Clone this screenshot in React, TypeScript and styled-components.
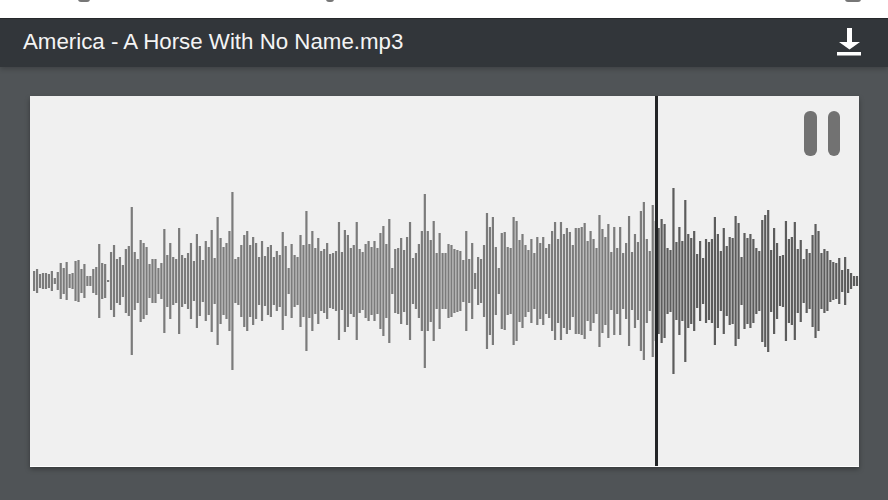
import React, { FC } from "react";
import styled, { createGlobalStyle } from "styled-components";

const GlobalStyle = createGlobalStyle`
  html, body {
    margin: 0;
    padding: 0;
    background: #ffffff;
  }
  body {
    width: 888px;
    height: 500px;
    overflow: hidden;
    font-family: "Liberation Sans", Arial, sans-serif;
  }
`;

// half heights of each bar, read off the reference, centre line is y=185 in the svg
const PEAKS = [
  10, 12, 7, 8, 8, 7, 10, 3, 9, 18, 13, 19, 7, 8, 20, 21, 12, 17, 5, 5, 12, 14, 37, 18, 17, 1, 29, 36, 22, 24,
  16, 32, 35, 74, 29, 22, 41, 38, 34, 17, 22, 22, 13, 18, 52, 26, 38, 24, 22, 53, 26, 23, 28, 38, 20, 47, 35, 21, 40, 34,
  51, 23, 64, 43, 34, 38, 50, 89, 22, 24, 36, 46, 50, 36, 44, 38, 24, 40, 25, 34, 36, 24, 30, 26, 49, 35, 13, 37, 26, 24,
  46, 36, 70, 37, 50, 33, 43, 30, 32, 38, 27, 28, 30, 59, 29, 51, 46, 33, 36, 59, 32, 29, 37, 40, 34, 40, 33, 48, 55, 37,
  62, 13, 32, 33, 43, 31, 44, 59, 23, 28, 37, 50, 87, 50, 41, 60, 28, 48, 28, 28, 37, 36, 32, 31, 30, 21, 50, 22, 38, 8,
  24, 22, 36, 68, 54, 64, 34, 13, 48, 49, 34, 33, 64, 60, 41, 47, 36, 31, 42, 28, 44, 38, 44, 33, 37, 50, 59, 42, 59, 47,
  53, 49, 36, 53, 53, 54, 58, 40, 50, 42, 33, 66, 52, 44, 57, 29, 54, 33, 54, 28, 38, 65, 29, 47, 39, 70, 79, 42, 30, 76,
  60, 53, 62, 57, 33, 31, 93, 39, 54, 40, 81, 47, 43, 50, 27, 40, 23, 42, 39, 42, 64, 47, 30, 53, 35, 44, 43, 65, 58, 24,
  48, 43, 47, 42, 33, 30, 61, 66, 71, 31, 53, 38, 25, 26, 60, 42, 44, 59, 32, 41, 22, 32, 28, 46, 57, 50, 28, 32, 30, 21,
  19, 18, 23, 11, 24, 12, 8, 5, 5,
];

const BAR_STEP = 2.96;
const PLAYED_UNTIL = 625;

const Page = styled.div`
  width: 888px;
  height: 500px;
  display: flex;
  flex-direction: column;
  background: #ffffff;
  overflow: hidden;
`;

const PageAbove = styled.div`
  position: relative;
  height: 18px;
  flex: none;
  background: #ffffff;
  overflow: hidden;
`;

const Descender = styled.span<{ $left: number; $width: number }>`
  position: absolute;
  top: -1px;
  left: ${({ $left }) => $left}px;
  width: ${({ $width }) => $width}px;
  height: 3px;
  background: #777777;
  border-radius: 0 0 6px 6px;
  filter: blur(0.6px);
`;

const Player = styled.div`
  flex: 1;
  display: flex;
  flex-direction: column;
  background: #505457;
`;

const TitleBar = styled.div`
  height: 49px;
  flex: none;
  display: flex;
  align-items: center;
  justify-content: space-between;
  box-sizing: border-box;
  padding: 0 26px 2px 23px;
  background: #32363a;
  border-top: 1px solid #25282b;
  box-shadow: 0 2px 5px rgba(0, 0, 0, 0.22);
`;

const FileName = styled.span`
  color: #f4f4f4;
  font-size: 22.3px;
  line-height: 24px;
`;

const DownloadButton = styled.svg`
  width: 26px;
  height: 30px;
  display: block;
`;

const Body = styled.div`
  flex: 1;
  padding: 29px 29px 34px 30px;
  display: flex;
`;

const WaveCard = styled.div`
  position: relative;
  flex: 1;
  background: #f0f0f0;
  box-shadow: 0 1px 0 #ffffff, 0 3px 5px rgba(0, 0, 0, 0.35);
  display: flex;
  align-items: center;
`;

const WaveSvg = styled.svg`
  display: block;
  width: 829px;
  height: 370px;
  filter: blur(0.25px);
`;

const Playhead = styled.div`
  position: absolute;
  top: 0;
  bottom: 0;
  left: 625px;
  width: 2.5px;
  background: #222426;
`;

const PauseButton = styled.div`
  position: absolute;
  top: 15px;
  right: 19px;
  display: flex;
  gap: 11px;
`;

const PauseBar = styled.span`
  display: block;
  width: 12.5px;
  height: 45px;
  border-radius: 6px;
  background: #727272;
`;

const Waveform: FC<{ peaks: number[] }> = ({ peaks }) => (
  <WaveSvg viewBox="0 0 829 370">
    {peaks.map((peak, i) => {
      const x = 3 + i * BAR_STEP;
      return (
        <rect
          key={i}
          x={x}
          y={185 - peak}
          width={2.2}
          height={peak * 2}
          fill={x < PLAYED_UNTIL ? "#7b7b7b" : "#5c5c5c"}
        />
      );
    })}
  </WaveSvg>
);

const App: FC = () => {
  return (
    <Page>
      <GlobalStyle />
      <PageAbove>
        <Descender $left={78} $width={12} />
        <Descender $left={326} $width={8} />
        <Descender $left={845} $width={16} />
      </PageAbove>
      <Player>
        <TitleBar>
          <FileName>America - A Horse With No Name.mp3</FileName>
          <DownloadButton viewBox="0 0 26 30">
            <path d="M11 1h5v14h8l-10.500 7.500L3 15h8z" fill="#ffffff" />
            <rect x="1" y="25" width="24" height="3.500" fill="#ffffff" />
          </DownloadButton>
        </TitleBar>
        <Body>
          <WaveCard>
            <Waveform peaks={PEAKS} />
            <Playhead />
            <PauseButton>
              <PauseBar />
              <PauseBar />
            </PauseButton>
          </WaveCard>
        </Body>
      </Player>
    </Page>
  );
};

export default App;
